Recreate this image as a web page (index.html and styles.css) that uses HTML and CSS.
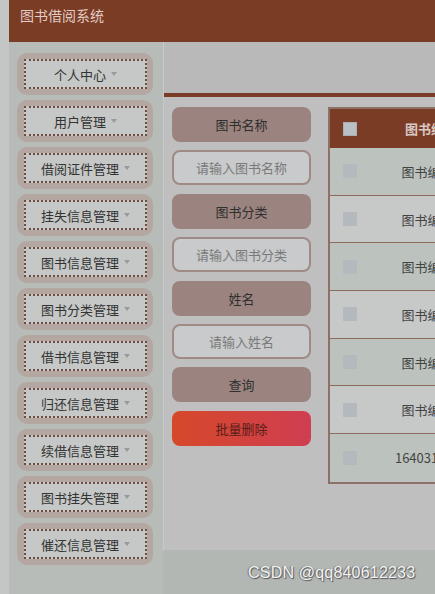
FILE: index.html
```html
<!DOCTYPE html>
<html lang="zh">
<head>
<meta charset="utf-8">
<title>图书借阅系统</title>
<link rel="stylesheet" href="styles.css">
</head>
<body>
<div class="page">
  <header class="header"><span class="title">图书借阅系统</span></header>
  <div class="layout">
    <nav class="sidebar">
      <div class="nav-item"><div class="nav-inner">个人中心<i class="caret"></i></div></div>
      <div class="nav-item"><div class="nav-inner">用户管理<i class="caret"></i></div></div>
      <div class="nav-item"><div class="nav-inner">借阅证件管理<i class="caret"></i></div></div>
      <div class="nav-item"><div class="nav-inner">挂失信息管理<i class="caret"></i></div></div>
      <div class="nav-item"><div class="nav-inner">图书信息管理<i class="caret"></i></div></div>
      <div class="nav-item"><div class="nav-inner">图书分类管理<i class="caret"></i></div></div>
      <div class="nav-item"><div class="nav-inner">借书信息管理<i class="caret"></i></div></div>
      <div class="nav-item"><div class="nav-inner">归还信息管理<i class="caret"></i></div></div>
      <div class="nav-item"><div class="nav-inner">续借信息管理<i class="caret"></i></div></div>
      <div class="nav-item"><div class="nav-inner">图书挂失管理<i class="caret"></i></div></div>
      <div class="nav-item"><div class="nav-inner">催还信息管理<i class="caret"></i></div></div>
    </nav>
    <main class="main">
      <div class="topbar"></div>
      <div class="rule"></div>
      <div class="content">
        <div class="search">
          <div class="label">图书名称</div>
          <div class="input">请输入图书名称</div>
          <div class="label">图书分类</div>
          <div class="input">请输入图书分类</div>
          <div class="label">姓名</div>
          <div class="input">请输入姓名</div>
          <div class="label">查询</div>
          <div class="label danger">批量删除</div>
        </div>
        <div class="table">
          <div class="row head"><span class="cell-check"><i class="box head-box"></i></span><span class="cell">图书编号</span><span class="cell">图书名称</span></div>
          <div class="row odd"><span class="cell-check"><i class="box"></i></span><span class="cell">图书编号1</span><span class="cell">图书名称1</span></div>
          <div class="row"><span class="cell-check"><i class="box"></i></span><span class="cell">图书编号2</span><span class="cell">图书名称2</span></div>
          <div class="row odd"><span class="cell-check"><i class="box"></i></span><span class="cell">图书编号3</span><span class="cell">图书名称3</span></div>
          <div class="row"><span class="cell-check"><i class="box"></i></span><span class="cell">图书编号4</span><span class="cell">图书名称4</span></div>
          <div class="row odd"><span class="cell-check"><i class="box"></i></span><span class="cell">图书编号5</span><span class="cell">图书名称5</span></div>
          <div class="row"><span class="cell-check"><i class="box"></i></span><span class="cell">图书编号6</span><span class="cell">图书名称6</span></div>
          <div class="row odd last"><span class="cell-check"><i class="box"></i></span><span class="cell">1640311001</span><span class="cell">图书名称7</span></div>
        </div>
      </div>
    </main>
  </div>
  <div class="watermark">CSDN @qq840612233</div>
</div>
</body>
</html>
```

FILE: styles.css
```css
* { box-sizing: border-box; }
html, body { margin: 0; padding: 0; }
body {
  background: #c3c6c4;
  font-family: "Noto Sans CJK SC", "Noto Sans", sans-serif;
  font-size: 13px;
  color: #333;
  overflow: hidden;
}
.page {
  margin-left: 9px;
  width: 426px;
  height: 594px;
  position: relative;
  overflow: hidden;
}
.header {
  height: 42px;
  background: #7b3c25;
  padding: 5px 0 0 11px;
}
.title {
  font-size: 14px;
  color: #e2cbc4;
}
.layout {
  display: flex;
  height: 552px;
  background: #b2b7b4;
}
.sidebar {
  width: 154px;
  flex: none;
  padding: 11px 0 0 8px;
  display: flex;
  flex-direction: column;
  gap: 5px;
  background: #b7bcb9;
}
.nav-item {
  width: 136px;
  height: 42px;
  border-radius: 10px;
  background: #b4a7a1;
  padding: 6px 6px 6px 7px;
}
.nav-inner {
  height: 30px;
  border: 2px dotted #6f4b41;
  background: #c5c8c6;
  display: flex;
  align-items: center;
  justify-content: center;
  font-size: 13px;
  color: #333;
}
.caret {
  display: inline-block;
  margin-left: 5px;
  width: 0;
  height: 0;
  border-top: 4px solid #9a9a9a;
  border-left: 3px solid transparent;
  border-right: 3px solid transparent;
}
.main {
  flex: 1;
  height: 508px;
  background: #bcbcbc;
  overflow: hidden;
  border-left: 1px solid #c6cac8;
}
.topbar {
  height: 51px;
  background: #b9b9b9;
}
.rule {
  height: 4px;
  background: #7b3c25;
}
.content {
  display: flex;
  gap: 17px;
  padding: 10px 0 0 8px;
  background: #bfbfbf;
  height: 453px;
}
.search {
  width: 139px;
  flex: none;
  display: flex;
  flex-direction: column;
  gap: 8.4px;
}
.label {
  height: 35px;
  border-radius: 8px;
  background: #9b847f;
  display: flex;
  align-items: center;
  justify-content: center;
  color: #2f2f2f;
}
.input {
  height: 35px;
  border-radius: 8px;
  background: #c8cacb;
  border: 2px solid #a08a85;
  display: flex;
  align-items: center;
  justify-content: center;
  color: #7a7a7a;
}
.danger {
  background: linear-gradient(90deg, #d6482a, #cf3e51);
  color: #5a1c17;
}
.table {
  width: 400px;
  flex: none;
  align-self: flex-start;
  border: 2px solid #8d7166;
  border-right: none;
}
.row {
  display: flex;
  align-items: center;
  height: 47.7px;
  background: #c7c8c8;
  border-bottom: 1px solid #8e6a5c;
}
.row.odd { background: #bcc3bf; }
.row.last { border-bottom: none; }
.row.head {
  height: 39px;
  background: #7b3c25;
  border-bottom: none;
  color: #d8c8c3;
  font-weight: bold;
}
.cell-check {
  width: 45px;
  flex: none;
  padding-left: 13px;
  display: flex;
  align-items: center;
}
.box {
  display: block;
  width: 14px;
  height: 14px;
  background: #b3b9bc;
}
.head-box {
  background: #b9c0c4;
  border: 1px solid #a9b0b4;
}
.cell {
  width: 112px;
  flex: none;
  text-align: center;
  white-space: nowrap;
  color: #444;
}
.head .cell { color: #d8c8c3; }
.watermark {
  position: absolute;
  left: 239px;
  top: 564px;
  font-family: "Liberation Sans", Arial, sans-serif;
  font-size: 16px;
  color: #f2f2f2;
  text-shadow: 1px 1px 1px #555, -1px 0 1px #777;
  letter-spacing: 0.2px;
}
```
